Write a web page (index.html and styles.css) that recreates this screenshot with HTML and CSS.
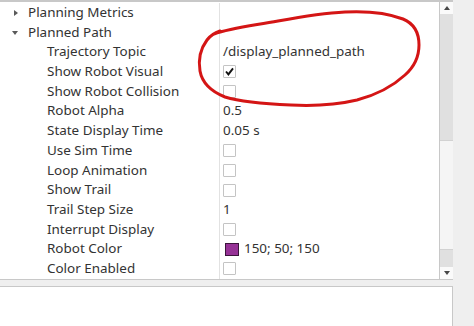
FILE: index.html
```html
<!DOCTYPE html>
<html lang="en">

<head>
  <meta charset="utf-8">
  <title>Displays - Planned Path</title>
  <meta name="viewport" content="width=device-width, initial-scale=1.0">
  <link rel="stylesheet" href="styles.css">
</head>

<body>
  <div class="window">
    <div class="main">
      <div class="tree">
        <div class="rows">
          <div class="row"><span class="name lvl-1"><span class="arrow closed"></span>Planning Metrics</span><span class="value"></span></div>
          <div class="row"><span class="name lvl-1"><span class="arrow open"></span>Planned Path</span><span class="value"></span></div>
          <div class="row"><span class="name lvl-2">Trajectory Topic</span><span class="value">/display_planned_path</span></div>
          <div class="row"><span class="name lvl-2">Show Robot Visual</span><span class="value"><span class="check"><svg width="11" height="11" viewBox="0 0 11 11"><path d="M2 5.5 L4.4 8.4 L9 2.4" fill="none" stroke="#111" stroke-width="1.9"/></svg></span></span></div>
          <div class="row"><span class="name lvl-2">Show Robot Collision</span><span class="value"><span class="check"></span></span></div>
          <div class="row"><span class="name lvl-2">Robot Alpha</span><span class="value">0.5</span></div>
          <div class="row"><span class="name lvl-2">State Display Time</span><span class="value">0.05 s</span></div>
          <div class="row"><span class="name lvl-2">Use Sim Time</span><span class="value"><span class="check"></span></span></div>
          <div class="row"><span class="name lvl-2">Loop Animation</span><span class="value"><span class="check"></span></span></div>
          <div class="row"><span class="name lvl-2">Show Trail</span><span class="value"><span class="check"></span></span></div>
          <div class="row"><span class="name lvl-2">Trail Step Size</span><span class="value">1</span></div>
          <div class="row"><span class="name lvl-2">Interrupt Display</span><span class="value"><span class="check"></span></span></div>
          <div class="row"><span class="name lvl-2">Robot Color</span><span class="value"><span class="swatch"></span>150; 50; 150</span></div>
          <div class="row"><span class="name lvl-2">Color Enabled</span><span class="value"><span class="check"></span></span></div>
          <!-- hand drawn mark over the first values -->
          <svg class="mark" width="474" height="120" viewBox="0 0 474 120">
            <path d="M214 34 C230 28 250 26 278 21 C300 17 325 13 345 12 C365 11 385 12 403 19 C415 24 419 33 419 45 C419 57 414 67 405 75 C393 86 376 95 357 100 C336 105 311 106 291 105 C266 104 241 102 225 97 C210 91 202 82 200 71 C198 59 201 48 207 40 C210 36 214 33 220 31" fill="none" stroke="#d41515" stroke-width="3" stroke-linecap="round"/>
          </svg>
        </div>
        <div class="scrollbar">
          <div class="sb-btn"><span class="tri up"></span></div>
          <div class="sb-dark"></div>
          <div class="sb-light"></div>
          <div class="sb-handle"></div>
          <div class="sb-btn"><span class="tri down"></span></div>
        </div>
      </div>
      <div class="splitter"></div>
      <div class="bottom"></div>
    </div>
    <div class="side"></div>
  </div>
</body>

</html>
```

FILE: styles.css
```css
:root {
  --text-color: rgb(51, 51, 51);
  --line-color: rgb(200, 200, 200);
  --grid-color: rgb(226, 226, 226);
  --panel-color: rgb(239, 239, 239);
  --row-height: 19.7px;
}

body {
  margin: 0;
  background-color: var(--panel-color);
  font-family: "Noto Sans", "DejaVu Sans", sans-serif;
  font-size: 13.45px;
  color: var(--text-color);
}

.window {
  display: flex;
  width: 474px;
  height: 326px;
  overflow: hidden;
}

.main {
  display: flex;
  flex-direction: column;
  width: 453px;
}

.side {
  flex: 1;
  background-color: var(--panel-color);
}

.tree {
  display: flex;
  height: 277px;
  background-color: white;
  border-top: 2px solid var(--line-color);
  border-bottom: 1px solid var(--line-color);
}

.rows {
  position: relative;
  width: 439px;
  padding-top: 1px;
  overflow: hidden;
}

.row {
  display: flex;
  height: var(--row-height);
  line-height: var(--row-height);
  white-space: nowrap;
}

.name {
  display: flex;
  align-items: center;
  width: 220px;
  border-right: 1px solid var(--grid-color);
  box-sizing: border-box;
}

.lvl-1 {
  padding-left: 11px;
}

.lvl-2 {
  padding-left: 47px;
}

.arrow {
  width: 17px;
  display: flex;
  align-items: center;
}

.arrow.closed::before {
  content: "";
  margin-left: 3px;
  border-left: 4px solid rgb(90, 90, 90);
  border-top: 3.5px solid transparent;
  border-bottom: 3.5px solid transparent;
}

.arrow.open::before {
  content: "";
  margin-left: 1px;
  border-top: 4px solid rgb(90, 90, 90);
  border-left: 3.5px solid transparent;
  border-right: 3.5px solid transparent;
}

.value {
  display: flex;
  align-items: center;
  padding-left: 3px;
}

.check {
  display: flex;
  width: 11px;
  height: 11px;
  border: 1px solid rgb(196, 196, 196);
  border-radius: 1px;
  background-color: white;
}

.swatch {
  width: 14px;
  height: 13px;
  margin: 0 5px 0 2px;
  background-color: rgb(150, 50, 150);
  border: 1px solid rgb(60, 20, 60);
  box-sizing: border-box;
}

.mark {
  position: absolute;
  left: 0;
  top: -2px;
  pointer-events: none;
}

.scrollbar {
  display: flex;
  flex-direction: column;
  width: 14px;
  border-left: 1px solid var(--line-color);
  box-sizing: border-box;
}

.sb-btn {
  height: 12px;
  display: flex;
  align-items: center;
  justify-content: center;
  background-color: rgb(250, 250, 250);
}

.tri.up {
  border-bottom: 4px solid rgb(70, 70, 70);
  border-left: 3.5px solid transparent;
  border-right: 3.5px solid transparent;
}

.tri.down {
  border-top: 4px solid rgb(70, 70, 70);
  border-left: 3.5px solid transparent;
  border-right: 3.5px solid transparent;
}

.sb-dark {
  height: 126px;
  background-color: rgb(224, 224, 224);
  border-bottom: 1px solid rgb(210, 210, 210);
}

.sb-light {
  flex: 1;
  background-color: rgb(245, 245, 245);
}

.sb-handle {
  height: 17px;
  background-color: rgb(224, 224, 224);
  border-top: 1px solid rgb(210, 210, 210);
}

.splitter {
  height: 6px;
  background-color: var(--panel-color);
}

.bottom {
  flex: 1;
  background-color: white;
  border-top: 1px solid var(--line-color);
  border-right: 1px solid var(--line-color);
}
```
